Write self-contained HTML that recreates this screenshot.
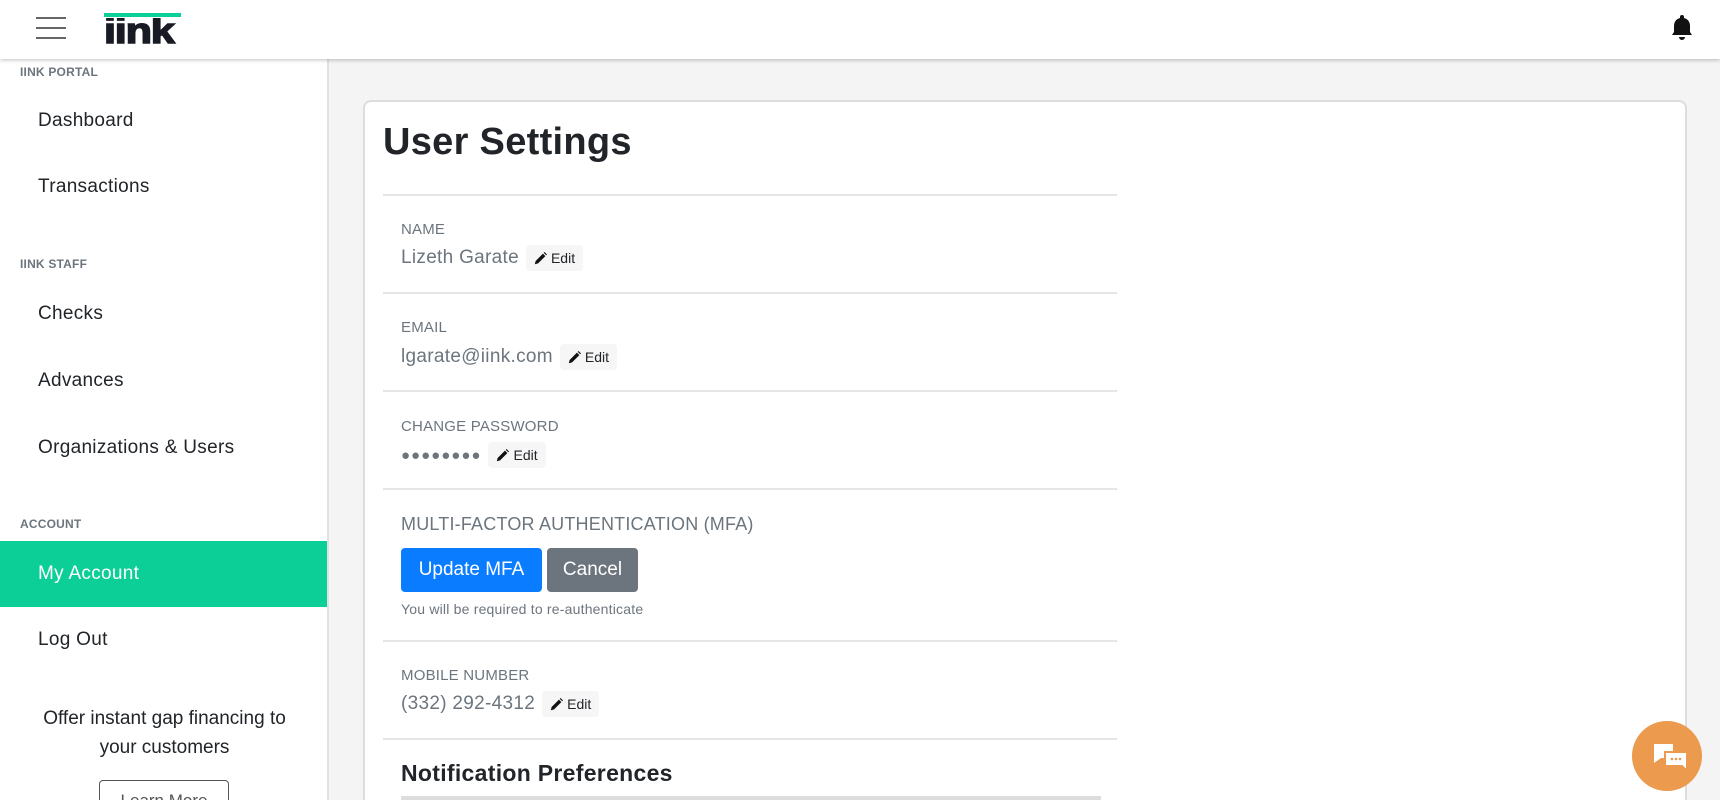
<!DOCTYPE html>
<html><head><meta charset="utf-8"><style>
*{box-sizing:border-box;margin:0;padding:0}
html,body{width:1720px;height:800px;overflow:hidden}
body{font-family:"Liberation Sans",sans-serif;background:#f4f4f4;color:#212529}
#w{position:relative;width:1720px;height:800px;overflow:hidden}
.hdr{position:absolute;left:0;top:0;width:1720px;height:59px;background:#fff;box-shadow:0 1px 4px rgba(0,0,0,.25);z-index:5}
.side{position:absolute;left:0;top:59px;width:329px;height:741px;background:#fff;border-right:2px solid #e2e2e2;overflow:hidden}
.sec{position:absolute;left:20px;font-size:12px;font-weight:bold;color:#6c757d;letter-spacing:.2px}
.it{position:absolute;left:38px;font-size:19px;color:#212529;letter-spacing:.3px}
.abs{position:absolute}
.card{position:absolute;left:363px;top:100px;width:1324px;height:700px;background:#fff;border:2px solid #ddd;border-bottom:none;border-radius:8px 8px 0 0}
.hr{position:absolute;left:383px;width:734px;height:2px;background:#e6e6e6}
.lbl{position:absolute;left:401px;font-size:15px;color:#6c757d;letter-spacing:.2px}
.val{position:absolute;left:401px;font-size:19px;color:#6c757d;display:flex;align-items:center;letter-spacing:.3px}
.ed{display:inline-flex;align-items:center;gap:4px;background:#f6f6f7;border-radius:4px;font-size:14px;color:#212529;padding:5px 8px;margin-left:7px;letter-spacing:0}
</style></head><body><div id="w">
<div class="hdr">
 <div class="abs" style="left:36px;top:17px;width:30px;height:2px;background:#666"></div>
 <div class="abs" style="left:36px;top:27px;width:30px;height:2px;background:#666"></div>
 <div class="abs" style="left:36px;top:37px;width:30px;height:2px;background:#666"></div>
 <div class="abs" style="left:104px;top:16px;font-size:36px;font-weight:900;color:#181a24;letter-spacing:-1px;line-height:30px;transform:scaleX(1.2);transform-origin:left;-webkit-text-stroke:1.5px #181a24">iink</div>
 <div class="abs" style="left:104px;top:13px;width:77px;height:5px;background:#0ccf97;border-bottom:1px solid #fff"></div>
 <svg class="abs" style="left:1670px;top:14px" width="24" height="26" viewBox="0 0 24 26"><path d="M12 1a2 2 0 0 1 2 2v1c4 1 6 4 6 8v6l2 3H2l2-3v-6c0-4 2-7 6-8V3a2 2 0 0 1 2-2z" fill="#111"/><path d="M9 23h6a3 3 0 0 1-6 0z" fill="#111"/></svg>
</div>
<div class="side">
 <div class="sec" style="top:6px">IINK PORTAL</div>
 <div class="it" style="top:51px">Dashboard</div>
 <div class="it" style="top:117px">Transactions</div>
 <div class="sec" style="top:198px">IINK STAFF</div>
 <div class="it" style="top:244px">Checks</div>
 <div class="it" style="top:311px">Advances</div>
 <div class="it" style="top:378px">Organizations &amp; Users</div>
 <div class="sec" style="top:458px">ACCOUNT</div>
 <div class="abs" style="left:0;top:482px;width:327px;height:66px;background:#0ccf97"></div>
 <div class="it" style="top:504px;color:#fff">My Account</div>
 <div class="it" style="top:570px">Log Out</div>
 <div class="abs" style="left:0;width:329px;top:645px;text-align:center;font-size:19px;line-height:29px">Offer instant gap financing to<br>your customers</div>
 <div class="abs" style="left:99px;top:721px;width:130px;height:40px;border:1px solid #555;border-radius:4px;font-size:17px;color:#555;text-align:center;padding-top:10px">Learn More</div>
</div>
<div class="card"></div>
<div class="abs" style="left:383px;top:121px;font-size:38px;font-weight:bold;letter-spacing:.3px">User Settings</div>
<div class="hr" style="top:194px"></div>
<div class="lbl" style="top:221px">NAME</div>
<div class="val" style="top:245px">Lizeth Garate<span class="ed"><svg width="13" height="13" viewBox="0 0 16 16"><path d="M1 15l1-4 9-9 3 3-9 9z M12 1l3 3 1-1-3-3z" fill="#111"/></svg>Edit</span></div>
<div class="hr" style="top:292px"></div>
<div class="lbl" style="top:319px">EMAIL</div>
<div class="val" style="top:344px">lgarate@iink.com<span class="ed"><svg width="13" height="13" viewBox="0 0 16 16"><path d="M1 15l1-4 9-9 3 3-9 9z M12 1l3 3 1-1-3-3z" fill="#111"/></svg>Edit</span></div>
<div class="hr" style="top:390px"></div>
<div class="lbl" style="top:418px">CHANGE PASSWORD</div>
<div class="val" style="top:442px;font-size:15px;letter-spacing:1px">●●●●●●●●<span class="ed"><svg width="13" height="13" viewBox="0 0 16 16"><path d="M1 15l1-4 9-9 3 3-9 9z M12 1l3 3 1-1-3-3z" fill="#111"/></svg>Edit</span></div>
<div class="hr" style="top:488px"></div>
<div class="lbl" style="top:514px;font-size:18px">MULTI-FACTOR AUTHENTICATION (MFA)</div>
<div class="abs" style="left:401px;top:548px;width:141px;height:44px;background:#0a7cff;border-radius:4px;color:#fff;font-size:19px;text-align:center;line-height:44px">Update MFA</div>
<div class="abs" style="left:547px;top:548px;width:91px;height:44px;background:#6c757d;border-radius:4px;color:#fff;font-size:19px;text-align:center;line-height:44px">Cancel</div>
<div class="lbl" style="top:601px;font-size:14px">You will be required to re-authenticate</div>
<div class="hr" style="top:640px"></div>
<div class="lbl" style="top:667px">MOBILE NUMBER</div>
<div class="val" style="top:691px">(332) 292-4312<span class="ed"><svg width="13" height="13" viewBox="0 0 16 16"><path d="M1 15l1-4 9-9 3 3-9 9z M12 1l3 3 1-1-3-3z" fill="#111"/></svg>Edit</span></div>
<div class="hr" style="top:738px"></div>
<div class="abs" style="left:401px;top:760px;font-size:23px;font-weight:bold;letter-spacing:.3px">Notification Preferences</div>
<div class="abs" style="left:401px;top:796px;width:700px;height:4px;background:#ddd"></div>
<div class="abs" style="left:1632px;top:721px;width:70px;height:70px;border-radius:50%;background:#ec9a4e"></div>
<svg class="abs" style="left:1652px;top:742px" width="38" height="30" viewBox="0 0 38 30"><path d="M2 2h19v14H9l-7 5z" fill="#fff"/><path d="M13 10h22v14l0 5-5-5H13z" fill="#fff" stroke="#ec9a4e" stroke-width="2"/><circle cx="20" cy="17" r="1.3" fill="#ec9a4e"/><circle cx="24" cy="17" r="1.3" fill="#ec9a4e"/><circle cx="28" cy="17" r="1.3" fill="#ec9a4e"/></svg>
</div></body></html>
